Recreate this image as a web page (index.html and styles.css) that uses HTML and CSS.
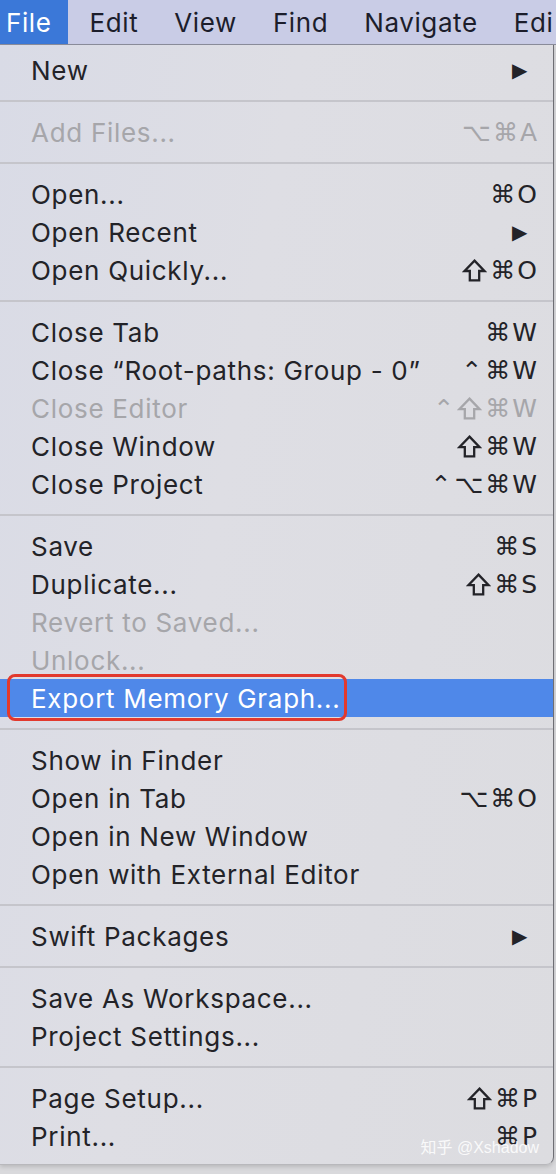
FILE: index.html
```html
<!DOCTYPE html>
<html>
<head>
<meta charset="utf-8">
<link rel="stylesheet" href="styles.css">
</head>
<body>
<div class="menubar">
  <span class="mb-item active">File</span>
  <span class="mb-item">Edit</span>
  <span class="mb-item">View</span>
  <span class="mb-item">Find</span>
  <span class="mb-item">Navigate</span>
  <span class="mb-item">Edi</span>
</div>
<div class="menu">
  <div class="row"><span class="label">New</span><span class="arrow">▶</span></div>
  <div class="sep"></div>
  <div class="row disabled"><span class="label">Add Files...</span><span class="key"><span>⌥</span><span>⌘</span><span>A</span></span></div>
  <div class="sep"></div>
  <div class="row"><span class="label">Open...</span><span class="key"><span>⌘</span><span>O</span></span></div>
  <div class="row"><span class="label">Open Recent</span><span class="arrow">▶</span></div>
  <div class="row"><span class="label">Open Quickly...</span><span class="key"><svg class="shift" viewBox="0 0 24 24"><path d="M12 2.5 L21.5 12.5 H16.5 V21.5 H7.5 V12.5 H2.5 Z"/></svg><span>⌘</span><span>O</span></span></div>
  <div class="sep"></div>
  <div class="row"><span class="label">Close Tab</span><span class="key"><span>⌘</span><span>W</span></span></div>
  <div class="row"><span class="label">Close “Root-paths: Group - 0”</span><span class="key"><span class="ctrl">⌃</span><span>⌘</span><span>W</span></span></div>
  <div class="row disabled"><span class="label">Close Editor</span><span class="key"><span class="ctrl">⌃</span><svg class="shift" viewBox="0 0 24 24"><path d="M12 2.5 L21.5 12.5 H16.5 V21.5 H7.5 V12.5 H2.5 Z"/></svg><span>⌘</span><span>W</span></span></div>
  <div class="row"><span class="label">Close Window</span><span class="key"><svg class="shift" viewBox="0 0 24 24"><path d="M12 2.5 L21.5 12.5 H16.5 V21.5 H7.5 V12.5 H2.5 Z"/></svg><span>⌘</span><span>W</span></span></div>
  <div class="row"><span class="label">Close Project</span><span class="key"><span class="ctrl">⌃</span><span>⌥</span><span>⌘</span><span>W</span></span></div>
  <div class="sep"></div>
  <div class="row"><span class="label">Save</span><span class="key"><span>⌘</span><span>S</span></span></div>
  <div class="row"><span class="label">Duplicate...</span><span class="key"><svg class="shift" viewBox="0 0 24 24"><path d="M12 2.5 L21.5 12.5 H16.5 V21.5 H7.5 V12.5 H2.5 Z"/></svg><span>⌘</span><span>S</span></span></div>
  <div class="row disabled"><span class="label">Revert to Saved...</span></div>
  <div class="row disabled"><span class="label">Unlock...</span></div>
  <div class="row selected"><span class="label">Export Memory Graph...</span><span class="annot"></span></div>
  <div class="sep"></div>
  <div class="row"><span class="label">Show in Finder</span></div>
  <div class="row"><span class="label">Open in Tab</span><span class="key"><span>⌥</span><span>⌘</span><span>O</span></span></div>
  <div class="row"><span class="label">Open in New Window</span></div>
  <div class="row"><span class="label">Open with External Editor</span></div>
  <div class="sep"></div>
  <div class="row"><span class="label">Swift Packages</span><span class="arrow">▶</span></div>
  <div class="sep"></div>
  <div class="row"><span class="label">Save As Workspace...</span></div>
  <div class="row"><span class="label">Project Settings...</span></div>
  <div class="sep"></div>
  <div class="row"><span class="label">Page Setup...</span><span class="key"><svg class="shift" viewBox="0 0 24 24"><path d="M12 2.5 L21.5 12.5 H16.5 V21.5 H7.5 V12.5 H2.5 Z"/></svg><span>⌘</span><span>P</span></span></div>
  <div class="row"><span class="label">Print...</span><span class="key"><span>⌘</span><span>P</span></span></div>
  <span class="watermark">知乎 @Xshadow</span>
</div>
</body>
</html>
```

FILE: styles.css
```css
* { box-sizing: border-box; }
html, body {
  margin: 0;
  padding: 0;
}
body {
  width: 556px;
  height: 1174px;
  overflow: hidden;
  background: #d9d9dc;
  font-family: Inter, "Noto Sans", "Liberation Sans", "Noto Sans CJK SC", sans-serif;
  color: #232328;
}
.menubar {
  height: 45px;
  background: #c9cce6;
  border-bottom: 1px solid #8c8e9c;
  display: flex;
  align-items: stretch;
  overflow: hidden;
  font-size: 26px;
  letter-spacing: 0.6px;
  color: #1c1d2b;
}
.mb-item {
  display: flex;
  align-items: center;
  flex-shrink: 0;
  padding: 0 18px;
}
.mb-item.active {
  background: #3b78d8;
  color: #fff;
  padding: 0 16px 0 6px;
  margin-right: 4px;
}
.menu {
  position: relative;
  width: 554px;
  height: 1120px;
  padding-top: 6px;
  background: linear-gradient(100deg, #d9dbe6 0%, #dedee4 40%, #dcdce0 100%);
  border-right: 1px solid #6e6e74;
  border-bottom: 1px solid #b8b8bc;
  border-bottom-right-radius: 8px;
  box-shadow: 0 2px 4px rgba(0,0,0,0.15);
  font-size: 26px;
  letter-spacing: 0.7px;
}
.row {
  position: relative;
  height: 38px;
  display: flex;
  align-items: center;
  justify-content: space-between;
  padding: 0 16px 0 31px;
  white-space: nowrap;
}
.row.disabled { color: #a6a6aa; }
.row.selected {
  background: #4f88e9;
  color: #fff;
}
.key {
  display: flex;
  align-items: center;
  gap: 2px;
  font-family: "DejaVu Sans", sans-serif;
  font-size: 25px;
  letter-spacing: 0;
}
.key .ctrl {
  margin-right: 1px;
}
.shift {
  width: 25px;
  height: 25px;
  fill: none;
  stroke: currentColor;
  stroke-width: 2.2;
  stroke-linejoin: miter;
  margin-right: 1px;
}
.arrow {
  font-family: "DejaVu Sans", sans-serif;
  font-size: 20px;
  margin-right: 9px;
}
.sep {
  height: 24px;
  display: flex;
  align-items: center;
}
.sep::before {
  content: "";
  display: block;
  width: 100%;
  height: 2px;
  background: #c5c5cb;
}
.annot {
  position: absolute;
  left: 7px;
  top: -5px;
  width: 340px;
  height: 47px;
  border: 3px solid #e2392d;
  border-radius: 8px;
}
.watermark {
  position: absolute;
  right: 14px;
  bottom: 6px;
  font-size: 16px;
  letter-spacing: 0;
  color: rgba(255,255,255,0.85);
  font-family: "Liberation Sans", "Noto Sans CJK SC", sans-serif;
}
```
